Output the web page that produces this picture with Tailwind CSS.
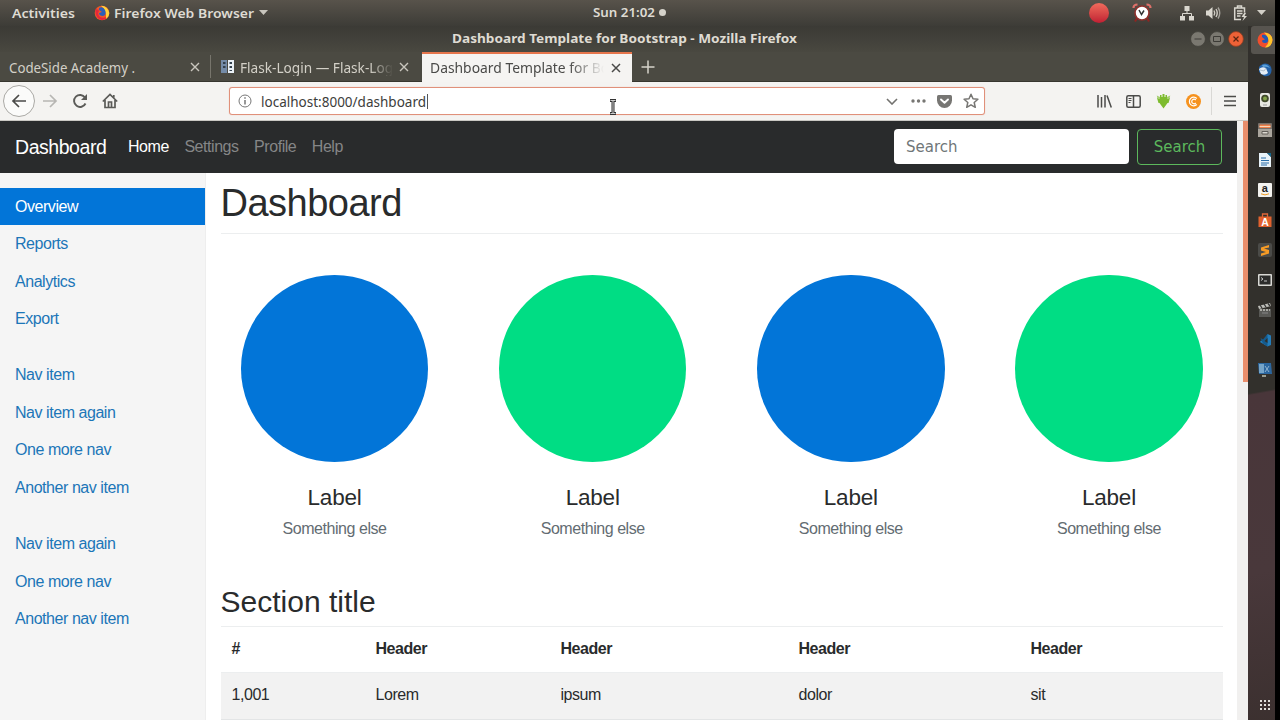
<!DOCTYPE html>
<html lang="en">

<head>
    <meta charset="UTF-8">
    <meta name="viewport" content="width=device-width, initial-scale=1.0">
    <title>Dashboard Template for Bootstrap</title>
    <script src="https://cdn.jsdelivr.net/npm/@tailwindcss/browser@4"></script>
</head>

<body class="relative w-[1280px] h-[720px] overflow-hidden bg-black font-['Noto_Sans',sans-serif]">
    <!-- Top panel -->
    <header class="relative w-[1275px] h-[26px] flex items-center justify-between bg-linear-to-b from-[#58534b] to-[#3d3c37] text-[13px] leading-none font-semibold text-[#dedbd3]">
        <div class="flex items-center pl-3 pb-px">
            <span class="w-[82px]"><svg class="block overflow-visible" width="64" height="16"><text x="0" y="12.500" textLength="63" lengthAdjust="spacingAndGlyphs" fill="currentColor">Activities</text></svg></span>
            <svg class="w-4 h-4" viewBox="0 0 16 16">
                <circle cx="8" cy="8" r="7.300" fill="#ef5a25" />
                <path d="M2 3Q0 10 5 14Q10 17 14 11Q10 14 6 12Q3 9 5 6L4 4L3 5Z" fill="#e4263c" />
                <path d="M7 .7Q14 1 15.300 8Q15 12 12 13.500Q13 6 7 .7Z" fill="#ffd23b" />
                <path d="M5 3Q9 1 11 5Q13 10 9 11Q5 11 5 8L8 7L5 5Z" fill="#2b5fb8" />
            </svg>
            <svg class="block overflow-visible ml-1" width="140" height="16"><text x="0" y="12.500" textLength="140" lengthAdjust="spacingAndGlyphs" fill="currentColor">Firefox Web Browser</text></svg>
            <svg class="ml-[5px] w-[9px] h-[5px]" viewBox="0 0 9 5"><path d="M0 0H9L4.500 5Z" fill="#c8c5bd" /></svg>
        </div>
        <div class="absolute left-[593px] top-0 h-[24px] flex items-center gap-[4px]">
            <svg class="block overflow-visible" width="62" height="16"><text x="0" y="12.500" textLength="62" lengthAdjust="spacingAndGlyphs" fill="currentColor">Sun 21:02</text></svg>
            <span class="w-[7px] h-[7px] rounded-full bg-[#d5d2ca]"></span>
        </div>
        <div class="flex items-center pr-[9px] pb-px">
            <span class="w-5 h-5 rounded-full bg-linear-to-b from-[#f06a5c] to-[#c01d33] mr-[23px]"></span>
            <svg class="w-5 h-5 mr-[27px]" viewBox="0 0 20 20">
                <path d="M1.500 5Q1.500 1.500 5.500 1.500M14.500 1.500Q18.500 1.500 18.500 5" fill="none" stroke="#e0716a" stroke-width="2.200" />
                <path d="M5 15L3 18.500M15 15L17 18.500" stroke="#8d2522" stroke-width="2" />
                <circle cx="10" cy="10" r="7" fill="#fff" stroke="#8f2f2b" stroke-width="1.600" />
                <path d="M7 7L9.500 11.500L12 7.500" fill="none" stroke="#333" stroke-width="1.500" />
            </svg>
            <svg class="w-4 h-4 mr-[10px]" viewBox="0 0 16 16" fill="#dad7cf">
                <path d="M5.500 1H10.500V6H5.500ZM1 11H6V15.500H1ZM10 11H15V15.500H10Z" />
                <path d="M8 5V8.500M3.500 11V8.500H12.500V11" fill="none" stroke="#dad7cf" />
            </svg>
            <svg class="w-4 h-4 mr-3" viewBox="0 0 16 16" fill="none" stroke="#a5a29b" stroke-width="1.400">
                <path d="M1 5.500H3.500L7.500 2V14L3.500 10.500H1Z" fill="#dad7cf" stroke="none" />
                <path d="M9 5.500Q10.500 8 9 10.500M11 4Q13.500 8 11 12" stroke="#d0cdc5" />
                <path d="M13 2.500Q16.500 8 13 13.500" />
            </svg>
            <svg class="w-[15px] h-4 mr-[9px]" viewBox="0 0 15 16" fill="none" stroke="#dad7cf" stroke-width="1.500">
                <path d="M8 14.500H1.700V3H11.500V7.500M4.500 2.500V1H8.500V2.500M4 6H9.500M4 8.500H9.500M4 11H7.500" />
                <path d="M11.500 7.500L8.500 12H11L9.500 16L14 11H11.500L13 8Z" fill="#dad7cf" stroke="none" />
            </svg>
            <svg class="w-[9px] h-[5px]" viewBox="0 0 9 5"><path d="M0 0H9L4.500 5Z" fill="#d2cfc7" /></svg>
        </div>
    </header>

    <div class="flex h-[694px]">
        <!-- Browser window -->
        <div class="w-[1248px] flex flex-col">
            <div class="relative h-[26px] shrink-0 bg-linear-to-b from-[#3b3a35] to-[#494840] text-[13px] font-bold text-[#dfdbd2]">
                <svg class="absolute left-[452px] top-0 overflow-visible" width="345" height="26"><text x="0" y="17" textLength="345" lengthAdjust="spacingAndGlyphs" fill="currentColor">Dashboard Template for Bootstrap - Mozilla Firefox</text></svg>
                <div class="h-[25px] flex items-center justify-end gap-[3px] pr-1">
                    <svg class="w-4 h-4" viewBox="0 0 16 16"><circle cx="8" cy="8" r="7.400" fill="#7a7870" stroke="#403f39" stroke-width=".8" /><path d="M4.500 8H11.500" stroke="#3c3b36" /></svg>
                    <svg class="w-4 h-4" viewBox="0 0 16 16"><circle cx="8" cy="8" r="7.400" fill="#7a7870" stroke="#403f39" stroke-width=".8" /><path d="M4.500 5.500H11.500V10.500H4.500Z" fill="none" stroke="#3c3b36" /></svg>
                    <svg class="w-4 h-4" viewBox="0 0 16 16"><circle cx="8" cy="8" r="7.400" fill="#ee6237" stroke="#8b3c22" stroke-width=".8" /><path d="M5.500 5.500L10.500 10.500M10.500 5.500L5.500 10.500" stroke="#5a2512" stroke-width="1.200" /></svg>
                </div>
            </div>

            <!-- Tabs -->
            <div class="h-[30px] shrink-0 flex bg-[#4b4a42] text-[13.500px] text-[#d3d0c7] border-b border-[#37362f]">
                <div class="w-[211px] flex items-center pl-[9px] pr-[11px] justify-between">
                    <svg class="overflow-visible" width="127" height="18"><text x="0" y="14.500" textLength="126" lengthAdjust="spacingAndGlyphs" fill="currentColor">CodeSide Academy .</text></svg>
                    <svg class="w-[10px] h-[10px]" viewBox="0 0 10 10"><path d="M1 1L9 9M9 1L1 9" stroke="#c9c6bd" stroke-width="1.400" /></svg>
                </div>
                <div class="w-[211px] flex items-center pl-[9px] pr-[13px]">
                    <span class="-ml-[10px] mr-[10px] w-px h-[23px] bg-[#77756c]"></span>
                    <svg class="shrink-0 w-[13px] h-[13px]" viewBox="0 0 13 13">
                        <path d="M0 0H6V13H0Z" fill="#748ba7" />
                        <path d="M7 0H13V13H7Z" fill="#e9f0f6" />
                        <path d="M2 2H4.500V4H2ZM2 6H4.500V8H2ZM8.500 2H11V4H8.500ZM8.500 6H11V8H8.500ZM8.500 10H11V11H8.500Z" fill="#33414e" />
                    </svg>
                    <div class="ml-[6px] w-[153px] overflow-hidden mask-r-from-85% mask-r-to-100%">
                        <svg class="overflow-visible" width="153" height="18"><text x="0" y="14.500" textLength="165" lengthAdjust="spacingAndGlyphs" fill="currentColor">Flask-Login — Flask-Login</text></svg>
                    </div>
                    <svg class="ml-auto shrink-0 w-[10px] h-[10px]" viewBox="0 0 10 10"><path d="M1 1L9 9M9 1L1 9" stroke="#c9c6bd" stroke-width="1.400" /></svg>
                </div>
                <div class="w-[210px] -mb-px flex items-center pl-[8px] pr-[11px] border-t-2 border-[#e6754c] bg-[#f5f4f2] text-[#4a4a48]">
                    <div class="w-[174px] overflow-hidden mask-r-from-80% mask-r-to-100%">
                        <svg width="260" height="18"><text x="0" y="13.500" textLength="226" lengthAdjust="spacingAndGlyphs" fill="currentColor">Dashboard Template for Bootstrap</text></svg>
                    </div>
                    <svg class="ml-auto w-[10px] h-[10px]" viewBox="0 0 10 10"><path d="M1 1L9 9M9 1L1 9" stroke="#4a4a48" stroke-width="1.500" /></svg>
                </div>
                <svg class="ml-[9px] mt-2 w-[14px] h-[14px]" viewBox="0 0 14 14"><path d="M7 .5V13.500M.5 7H13.500" stroke="#d6d3ca" stroke-width="1.500" /></svg>
            </div>

            <!-- Toolbar -->
            <div class="h-[39px] shrink-0 flex items-center bg-[#f4f3f1] border-b border-[#c9c8c4]">
                <div class="w-[229px] flex items-center pl-[3px]">
                    <span class="w-8 h-8 rounded-full border border-[#aaa9a5] bg-[#fbfbfa] flex items-center justify-center">
                        <svg class="w-4 h-4" viewBox="0 0 16 16" fill="none" stroke="#4b4b49" stroke-width="1.700"><path d="M15 8H2M8 2L2 8L8 14" /></svg>
                    </span>
                    <svg class="ml-[7px] w-4 h-4" viewBox="0 0 16 16" fill="none" stroke="#b7b6b3" stroke-width="1.700"><path d="M1 8H14M8 2L14 8L8 14" /></svg>
                    <svg class="ml-[14px] w-4 h-4" viewBox="0 0 16 16" fill="none" stroke="#5b5b58" stroke-width="1.900"><path d="M13 4.500A6 6 0 1 0 13.500 10.500" /><path d="M15 1V7H9Z" fill="#5b5b58" stroke="none" /></svg>
                    <svg class="ml-[14px] w-4 h-4" viewBox="0 0 16 16" fill="none" stroke="#5b5b58" stroke-width="1.700"><path d="M.8 8.500L8 1.500L15.200 8.500M3 7V14.500H13V7M11.800 4.500V2" /><path d="M6.500 14V9H9.500V14" /></svg>
                </div>
                <div class="w-[756px] h-[28px] flex items-center rounded-[3px] border border-[#e0907a] bg-white pl-2 pr-[6px] shadow-[0_0_1px_#e9a99a]">
                    <svg class="w-[14px] h-[14px]" viewBox="0 0 14 14" fill="none" stroke="#777"><circle cx="7" cy="7" r="6" /><path d="M7 6V10.500M7 3.300V4.800" stroke-width="1.500" /></svg>
                    <svg class="ml-[9px] overflow-visible text-[14px]" width="166" height="20"><text x="0" y="15.500" textLength="165" lengthAdjust="spacingAndGlyphs" fill="#3d3d3b">localhost:8000/dashboard</text></svg>
                    <span class="w-px h-[15px] bg-[#555]"></span>
                    <svg class="ml-auto w-3 h-[7px]" viewBox="0 0 12 7" fill="none" stroke="#73726f" stroke-width="1.600"><path d="M1 1L6 6L11 1" /></svg>
                    <svg class="ml-[13px] w-[15px] h-1" viewBox="0 0 15 4" fill="#777673"><circle cx="2" cy="2" r="1.700" /><circle cx="7.500" cy="2" r="1.700" /><circle cx="13" cy="2" r="1.700" /></svg>
                    <svg class="ml-[11px] w-[15px] h-[13px]" viewBox="0 0 15 13"><path d="M1.500 0H13.500Q15 0 15 1.500V5.500A7.500 7.500 0 0 1 0 5.500V1.500Q0 0 1.500 0Z" fill="#777673" /><path d="M4 4.500L7.500 7.800L11 4.500" fill="none" stroke="#fff" stroke-width="1.900" stroke-linecap="round" stroke-linejoin="round" /></svg>
                    <svg class="ml-[11px] -mr-px w-4 h-4" viewBox="0 0 16 16" fill="none" stroke="#777673" stroke-width="1.500" stroke-linejoin="round"><path d="M8 1.300L10 5.700L14.900 6.200L11.200 9.500L12.300 14.300L8 11.800L3.700 14.300L4.800 9.500L1.100 6.200L6 5.700Z" /></svg>
                </div>
                <div class="ml-auto flex items-center pr-[12px]">
                    <svg class="w-[15px] h-[14px]" viewBox="0 0 15 14" stroke="#4b4b49" stroke-width="1.500"><path d="M1 1V13.500M4.500 3V13.500M8 1V13.500M10 1.500L14.300 13.500" /></svg>
                    <svg class="ml-[14px] w-[15px] h-[13px]" viewBox="0 0 15 13" fill="none" stroke="#4b4b49" stroke-width="1.500"><rect x=".8" y=".8" width="13.400" height="11.400" rx="1.500" /><path d="M7.500 1V12" /><path d="M2.500 3.500H5.500M2.500 5.500H5.500M2.500 7.500H4.500" stroke-width="1" /></svg>
                    <svg class="ml-[15px] w-[15px] h-[15px]" viewBox="0 0 15 15"><path d="M4 4V1H5.500V3H6.500V0H8.500V3H9.500V1H11V4H14L12.500 9H11.500L7.500 14.500L3.500 9H2.500L1 4Z" fill="#7dbb2e" /><path d="M.8 1.500L4 3V5H1.500ZM14.200 1.500L11 3V5H13.500Z" fill="#a5ce71" /></svg>
                    <svg class="ml-[15px] w-[15px] h-[15px]" viewBox="0 0 15 15" fill="none" stroke="#fff" stroke-width="1.200"><circle cx="7.500" cy="7.500" r="7.500" fill="#f6921e" stroke="none" /><path d="M10.800 4.500A4.300 4.300 0 1 0 10.800 10.500M9.800 6A2.300 2.300 0 1 0 9.800 9" /></svg>
                    <span class="ml-[10px] mr-[12px] w-px h-7 bg-[#d9d8d5]"></span>
                    <svg class="w-3 h-3" viewBox="0 0 12 12" stroke="#4b4b49" stroke-width="1.500"><path d="M0 1.500H12M0 6H12M0 10.500H12" /></svg>
                </div>
            </div>

            <!-- Page -->
            <div class="h-[599px] flex bg-white font-['Liberation_Sans',Arial,sans-serif] text-[16px] tracking-[-0.45px] leading-[22.500px] text-[#292b2c]">
                <div class="w-[1237px] flex flex-col">
                    <nav class="h-[52px] shrink-0 flex items-center bg-[#292b2c] px-[15px] text-[#858687]">
                        <a class="w-[113px] text-[19.500px] leading-[23px]">
                            <span class="text-white">Dashboard</span>
                        </a>
                        <div class="flex gap-[15.500px] pt-px">
                            <a class="text-white">Home</a>
                            <a>Settings</a>
                            <a>Profile</a>
                            <a>Help</a>
                        </div>
                        <form class="ml-auto flex gap-2 font-['DejaVu_Sans',sans-serif] text-[15px] tracking-normal">
                            <input type="text" placeholder="Search" class="w-[235px] h-[35px] rounded-[4px] bg-white px-3 pt-px placeholder:text-[#6f7678]">
                            <button type="button" class="w-[85px] h-[36px] pt-px rounded-[4px] border border-[#5cb85c] text-[#5cb85c]">Search</button>
                        </form>
                    </nav>
                    <div class="flex-1 min-h-0 flex">
                        <aside class="w-[206px] shrink-0 flex flex-col gap-[18.750px] pt-[14.500px] bg-[#f5f5f5] border-r border-[#eee] text-[#1c76b8]">
                            <ul class="*:h-[37.500px] *:px-[15px] *:py-[8px]">
                                <li class="bg-[#0275d8] text-white">Overview</li>
                                <li>Reports</li>
                                <li>Analytics</li>
                                <li>Export</li>
                            </ul>
                            <ul class="*:h-[37.500px] *:px-[15px] *:py-[8px]">
                                <li>Nav item</li>
                                <li>Nav item again</li>
                                <li>One more nav</li>
                                <li>Another nav item</li>
                            </ul>
                            <ul class="*:h-[37.500px] *:px-[15px] *:py-[8px]">
                                <li>Nav item again</li>
                                <li>One more nav</li>
                                <li>Another nav item</li>
                            </ul>
                        </aside>
                        <main class="flex-1 pl-[14.500px] pr-[14px] overflow-hidden">
                            <h1 class="h-[60.500px] pt-[10px] border-b border-[#eceeef] text-[38px] leading-[41px] tracking-[-0.500px]">Dashboard</h1>
                            <section class="-mx-[15px] mt-[41px] grid grid-cols-4 text-center">
                                <div>
                                    <div class="mx-auto size-[187.500px] rounded-full bg-[#0275d8]"></div>
                                    <h4 class="mt-[22.500px] text-[22.500px] leading-[25px] tracking-[-0.200px]">Label</h4>
                                    <div class="mt-[8px] text-[#636c72]">Something else</div>
                                </div>
                                <div>
                                    <div class="mx-auto size-[187.500px] rounded-full bg-[#00dd84]"></div>
                                    <h4 class="mt-[22.500px] text-[22.500px] leading-[25px] tracking-[-0.200px]">Label</h4>
                                    <div class="mt-[8px] text-[#636c72]">Something else</div>
                                </div>
                                <div>
                                    <div class="mx-auto size-[187.500px] rounded-full bg-[#0275d8]"></div>
                                    <h4 class="mt-[22.500px] text-[22.500px] leading-[25px] tracking-[-0.200px]">Label</h4>
                                    <div class="mt-[8px] text-[#636c72]">Something else</div>
                                </div>
                                <div>
                                    <div class="mx-auto size-[187.500px] rounded-full bg-[#00dd84]"></div>
                                    <h4 class="mt-[22.500px] text-[22.500px] leading-[25px] tracking-[-0.200px]">Label</h4>
                                    <div class="mt-[8px] text-[#636c72]">Something else</div>
                                </div>
                            </section>
                            <h2 class="mt-[44.500px] h-[41px] text-[30px] leading-[33px] tracking-normal">Section title</h2>
                            <table class="w-full table-fixed text-left">
                                <thead>
                                    <tr class="h-[46px] border-t border-b border-[#eceeef] *:px-[11px] *:font-bold">
                                        <th class="w-[144px]">#</th>
                                        <th class="w-[185px]">Header</th>
                                        <th class="w-[238px]">Header</th>
                                        <th class="w-[232px]">Header</th>
                                        <th>Header</th>
                                    </tr>
                                </thead>
                                <tbody>
                                    <tr class="h-[47px] border-b border-[#e3e5e6] bg-[#f2f2f2] *:px-[11px]">
                                        <td>1,001</td>
                                        <td>Lorem</td>
                                        <td>ipsum</td>
                                        <td>dolor</td>
                                        <td>sit</td>
                                    </tr>
                                </tbody>
                            </table>
                        </main>
                    </div>
                </div>
                <div class="w-[11px] bg-[#f1f0ef]">
                    <div class="ml-auto w-[5px] h-[261px] bg-[#e98e6c]"></div>
                </div>
            </div>
        </div>

        <!-- Dock -->
        <aside class="w-[27px] flex flex-col bg-[linear-gradient(170deg,#32302c_0,#32302c_362px,#49363a_364px,#49383b_540px,#3b302f_694px)]">
            <div class="ml-[3px] w-[24px] h-7 flex items-center pl-[6px] rounded-l-[3px] bg-[#57544f]">
                <svg class="w-4 h-4" viewBox="0 0 16 16">
                    <circle cx="8" cy="8" r="7.500" fill="#f04e2d" />
                    <path d="M7 .5Q15 1 15.500 8Q15 15 8 15.500Q13 11 11 7Q10 3 7 .5Z" fill="#ffc52b" />
                    <path d="M5 3Q9 2 11 6Q12 11 8 11Q5 11 5 8.500L8 7.500L5 5Z" fill="#2458b5" />
                </svg>
            </div>
            <div class="flex flex-col gap-4 pt-[9px] pl-[10px] *:w-[14px] *:h-[14px] *:shrink-0">
                <svg viewBox="0 0 14 14"><path d="M1 4Q5-1 10 1Q15 4 13 10Q11 14 6 13L1 9Z" fill="#2462a8" /><path d="M4 2Q9 0 12 5Q8 3 5 4Z" fill="#5ba0d8" /><path d="M1 6Q4 3 8 5L10 10Q7 13 3 11Z" fill="#e5edf5" /><path d="M2 7L6 8L8 5" fill="none" stroke="#9ab" stroke-width=".7" /></svg>
                <svg viewBox="0 0 14 14"><rect x="2" width="10" height="14" rx="2" fill="#e7e7e2" /><circle cx="7" cy="5.500" r="3.800" fill="#414a2b" /><circle cx="7" cy="5.500" r="2" fill="#83a34a" /><path d="M5 12H9" stroke="#999" /></svg>
                <svg viewBox="0 0 14 14"><rect width="14" height="14" rx="1" fill="#77716b" /><path d="M1.500 1.500H12.500V5H1.500Z" fill="#ef814c" /><path d="M1.500 3.500H12.500" stroke="#f8d7b8" /><path d="M0 6H14V14H0Z" fill="#aaa59d" /><path d="M4 8.500H10V11H4Z" fill="#ddd9d2" stroke="#625e59" /></svg>
                <svg viewBox="0 0 14 14"><path d="M1 0H9L13 4V14H1Z" fill="#e8f2f8" /><path d="M9 0H13V4Z" fill="#15688e" /><path d="M3 5H8M3 7.500H11M3 10H11M3 12H9" stroke="#286da8" stroke-width="1.200" /></svg>
                <svg viewBox="0 0 14 14"><rect width="14" height="14" rx="1" fill="#f3f2ef" /><text x="3.700" y="9" font-family="Liberation Sans" font-size="11" font-weight="700" fill="#222">a</text><path d="M3 10.800Q7 13 11 10.800" fill="none" stroke="#ef9b22" /></svg>
                <svg viewBox="0 0 14 14"><path d="M4.500 4V1H9.500V4" fill="none" stroke="#e06738" stroke-width="1.300" /><path d="M.5 3.500H13.500V14H.5Z" fill="#e2622e" /><text x="3.200" y="12.500" font-family="Liberation Sans" font-size="10.500" font-weight="700" fill="#fff">A</text></svg>
                <svg viewBox="0 0 14 14"><rect width="14" height="14" rx="2" fill="#4b4b48" /><path d="M11 2L3 4.500V7.500L8 9L3 10.500V13L11 10.500V7L6 5.500L11 4.500Z" fill="#f79b25" /></svg>
                <svg viewBox="0 0 14 14"><rect y="1" width="14" height="12" rx="1" fill="#d9d9d5" /><rect x="1.500" y="2.500" width="11" height="9" fill="#2c2c2b" /><path d="M3 4.500L5 6L3 7.500M6 8H9" fill="none" stroke="#eee" stroke-width=".8" /></svg>
                <svg viewBox="0 0 14 14"><path d="M1 6H13V14H1Z" fill="#595956" /><path d="M0 3L12 0L13 3L1 6Z" fill="#bdbdb8" /><path d="M2 2L4 5M6 1L8 4M10 .5L12 3" stroke="#333" stroke-width="1.300" /><path d="M2 7H12" stroke="#c4c4bf" stroke-dasharray="2 1" stroke-width="1.500" /><path d="M4 10H10" stroke="#888" /></svg>
                <svg viewBox="0 0 14 14"><path d="M9.500 1L13 2.500V12L9.500 13.500L2 9L3 7.500L5.500 8.500Z" fill="#237cba" /><path d="M9.500 1V13.500L5 10.500L2.500 5L5 6.500Z" fill="#155a8c" /><path d="M9.500 5V10L6.500 8Z" fill="#302f2b" /></svg>
                <svg viewBox="0 0 14 14"><path d="M0 0H13L14 11H1Z" fill="#2b669f" /><path d="M1 1H6V10H1Z" fill="#75a4c9" /><path d="M7 3L11 9M11 3L7 9" stroke="#8fb2d0" /><path d="M4 13H8" stroke="#bcc0b2" stroke-width="1.500" /></svg>
            </div>
            <svg class="mt-auto mb-[10px] ml-3 w-[10px] h-[10px]" viewBox="0 0 10 10" fill="#e1dfdb">
                <path d="M0 0H2V2H0ZM4 0H6V2H4ZM8 0H10V2H8ZM0 4H2V6H0ZM4 4H6V6H4ZM8 4H10V6H8ZM0 8H2V10H0ZM4 8H6V10H4ZM8 8H10V10H8Z" />
            </svg>
        </aside>
    </div>

    <!-- Mouse pointer -->
    <svg class="absolute left-[609px] top-[99px] w-2 h-4" viewBox="0 0 8 16" fill="none">
        <path d="M1 1.500H7M4 1.500V14.500M1 14.500H7" stroke="#333" stroke-width="3" />
        <path d="M1.500 1.500H6.500M4 1.500V14.500M1.500 14.500H6.500" stroke="#ccc" stroke-width="1" />
    </svg>
</body>

</html>
